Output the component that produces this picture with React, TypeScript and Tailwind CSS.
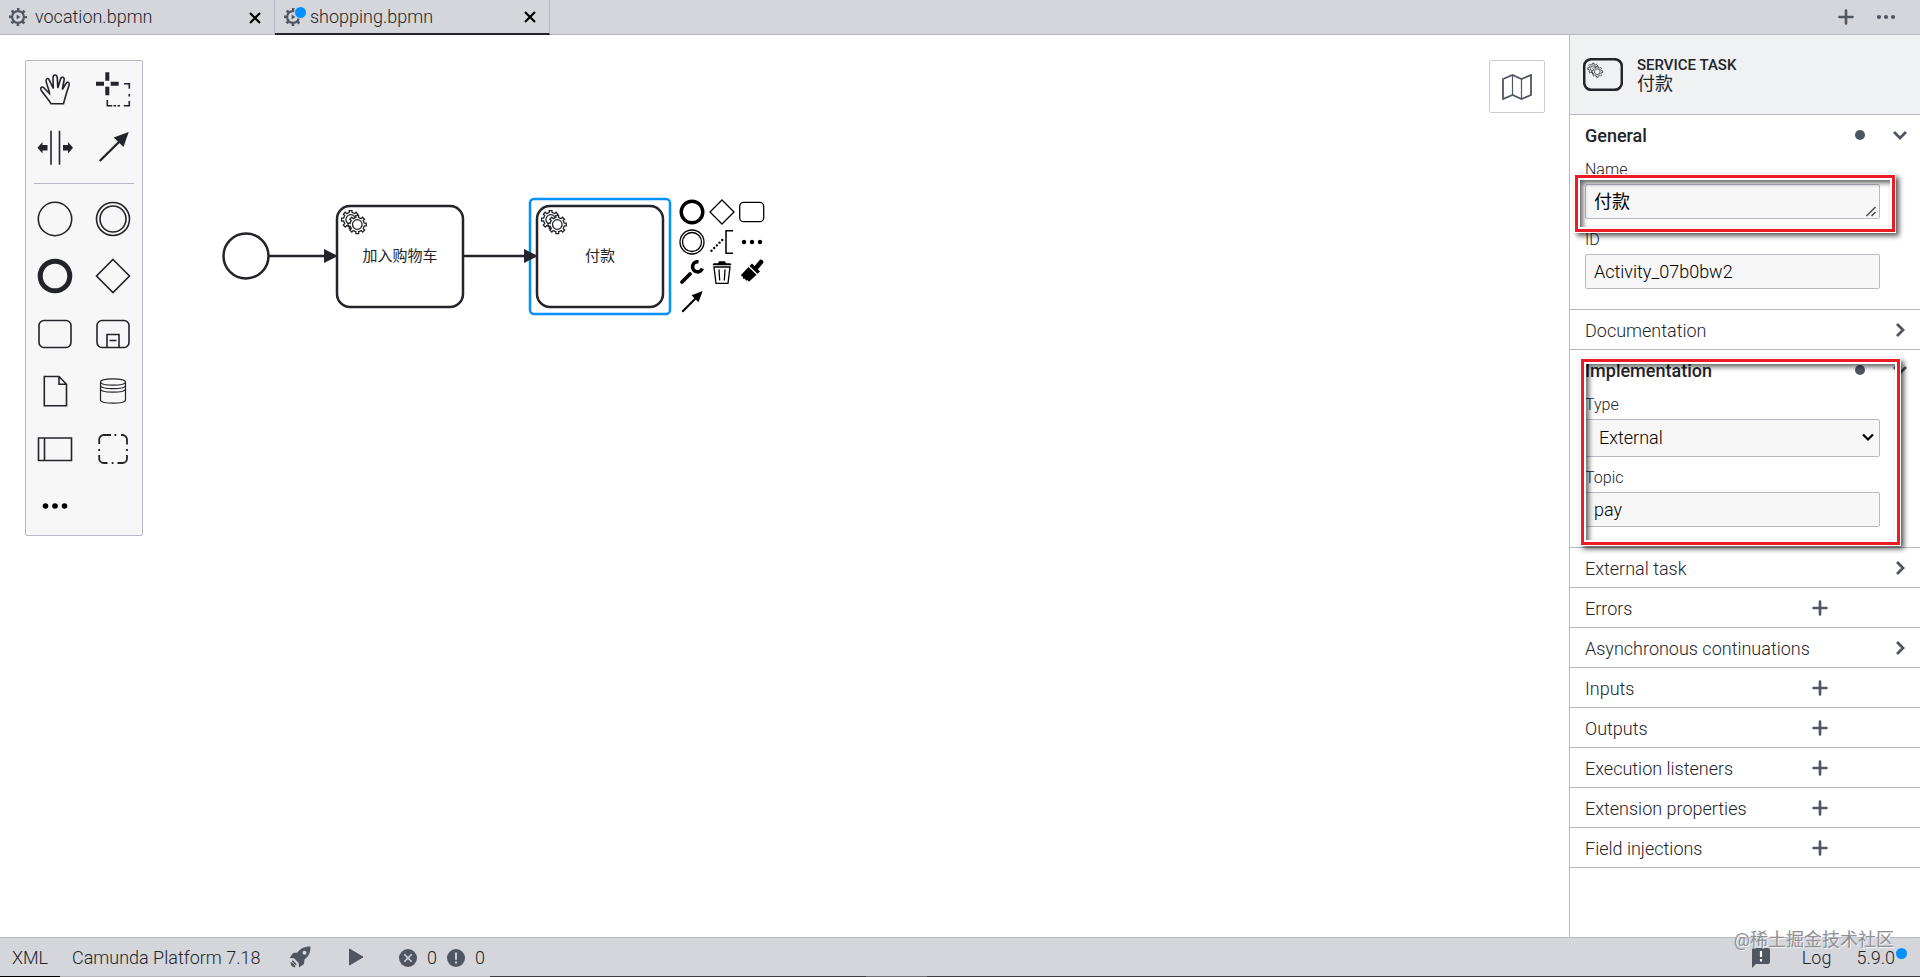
import { useState, type ReactNode } from "react";
import { clsx } from "clsx";

const GEAR =
  "v-1.713c.352-.07.704-.178 1.048-.321.344-.145.666-.321.966-.521l1.194 1.18 1.567-1.577-1.195-1.18c.403-.614.683-1.299.825-2.018l1.622-.01v-2.22l-1.637.01c-.073-.352-.178-.7-.323-1.044-.145-.344-.321-.664-.523-.962l1.131-1.136-1.583-1.563-1.13 1.136c-.614-.401-1.303-.681-2.023-.823l.01-1.618h-2.241l.004 1.631c-.354.074-.705.18-1.05.324-.344.144-.665.321-.963.52l-1.17-1.158-1.567 1.579 1.168 1.157c-.402.613-.683 1.298-.824 2.017l-1.659.003v2.222l1.672-.006c.074.351.18.702.325 1.044.145.345.321.665.522.961l-1.199 1.197 1.584 1.56 1.196-1.193c.614.403 1.303.682 2.024.823l.001 1.699h2.227z";

function Gears({ fill }: { fill: string }) {
  return (
    <g fill={fill} stroke="#22242a" strokeWidth="1">
      <path d={`M12 18${GEAR}`} />
      <circle cx="10.9" cy="10.7" r="3.8" />
      <path d={`M17.2 22${GEAR}`} />
      <circle cx="16.1" cy="14.7" r="3.8" />
    </g>
  );
}

function PlusIcon() {
  return (
    <svg width="16" height="16" viewBox="0 0 16 16" className="stroke-[#505562]" strokeWidth="2.6" strokeLinecap="round">
      <path d="M8 1.5v13M1.5 8h13" />
    </svg>
  );
}

function ChevronIcon({ open }: { open: boolean }) {
  return (
    <svg width="16" height="16" viewBox="0 0 16 16" fill="none" className="stroke-[#505562]" strokeWidth="2.8">
      <path d={open ? "M2 5l6 6 6-6" : "M5 2l6 6-6 6"} />
    </svg>
  );
}

function TabGear() {
  return (
    <svg width="18" height="18" viewBox="0 0 18 18" fill="none" className="stroke-[#505562]">
      <circle cx="9" cy="9" r="5.9" strokeWidth="2.2" />
      <circle cx="9" cy="9" r="7.7" strokeWidth="2.6" strokeDasharray="2.6 3.447" strokeDashoffset="1.3" />
      <path d="M7.6 6.4v5.2L11.4 9z" className="fill-[#505562]" stroke="none" />
    </svg>
  );
}

interface TabProps {
  name: string;
  active?: boolean;
  dirty?: boolean;
}

function Tab({ name, active = false, dirty = false }: TabProps) {
  return (
    <div
      className={clsx(
        "relative flex h-full w-[275px] items-center border-r border-[#b8b9c7] pl-[9px] pr-[11px]",
        active && "border-b-2 border-b-[#22242a]"
      )}
    >
      <button type="button" className={clsx("flex flex-1 items-center gap-2 text-left", !active && "pb-px")}>
        <span className="relative">
          <TabGear />
          {dirty && (
            <span className="absolute -right-1 -top-px h-[11px] w-[11px] rounded-full bg-[#0090ff] ring-1 ring-[#d5d6db]" />
          )}
        </span>
        {name}
      </button>
      <button type="button" aria-label={`Close ${name}`} className="flex h-4 w-4 items-center justify-center">
        <svg width="12" height="12" viewBox="0 0 12 12" stroke="#000" strokeWidth="2.2">
          <path d="M1 1l10 10M11 1L1 11" />
        </svg>
      </button>
    </div>
  );
}

const paletteTop: { label: string; icon: ReactNode }[] = [
  {
    label: "Activate hand tool",
    icon: (
      <path d="M16 33.7C13.5 29 8 23.5 6 19.8C4.8 17 7.8 16 9.5 18.5L14.5 23.5C14.3 19.5 11.3 14 11 10.8C11 8 13.6 7.8 14.3 10.2L18.3 18.5L18 8C18 4 22 4 22.3 8L22.8 18L25.5 9C26.3 6 29.6 7 29.1 10L27.3 19.5L31 13.5C32.3 11 35 12.5 34 15.5L31.5 23C30.3 27 29.5 30 28.5 33.7Z" />
    ),
  },
  {
    label: "Activate lasso tool",
    icon: (
      <>
        <path d="M14.3 2.3v8.5M14.3 16.7v8.5M3 13.7h8M17.7 13.7h8" strokeWidth="4" />
        <path d="M31 13.7h5.3v5M36.3 24v2.5M36.3 31v4.7h-5.5M27 35.7h-2.5M23 35.7h-2.5M14.3 30v5.7h5" />
      </>
    ),
  },
  {
    label: "Activate create/remove space tool",
    icon: (
      <>
        <path d="M16 2.7v34M24.5 2.7v34" />
        <path d="M2.5 19.7l5-5.7v3h5v5.4h-5v3zM38 19.7l-5-5.7v3h-5v5.4h5v3z" fill="#22242a" stroke="none" />
      </>
    ),
  },
  {
    label: "Activate global connect tool",
    icon: (
      <>
        <path d="M6.7 33L28 12" strokeWidth="2.4" />
        <path d="M35.7 4L20.7 9.5l9.8 9.5z" fill="#22242a" stroke="none" />
      </>
    ),
  },
];

const paletteShapes: { label: string; icon: ReactNode }[] = [
  { label: "Create start event", icon: <circle cx="20" cy="20" r="16.7" /> },
  {
    label: "Create intermediate event",
    icon: (
      <>
        <circle cx="20" cy="20" r="16.5" />
        <circle cx="20" cy="20" r="13" />
      </>
    ),
  },
  { label: "Create end event", icon: <circle cx="20" cy="20" r="14.8" strokeWidth="5" /> },
  { label: "Create gateway", icon: <path d="M20 3.5L36.5 20 20 36.5 3.5 20z" /> },
  { label: "Create task", icon: <rect x="4" y="6.5" width="32" height="27" rx="5" /> },
  {
    label: "Create expanded sub-process",
    icon: (
      <>
        <rect x="4" y="6.5" width="32" height="27" rx="5" />
        <path d="M14 33.5v-13h12v13M16.5 26.5h7" />
      </>
    ),
  },
  { label: "Create data object", icon: <path d="M9.3 5.5H24l7.5 7.8v21.4H9.3zM24 5.5v7.8h7.5" /> },
  {
    label: "Create data store",
    icon: (
      <path
        d="M7.5 11c0-4.200 25-4.200 25 0v18c0 4.200-25 4.200-25 0zM7.500 11c0 4.200 25 4.200 25 0M7.500 14.500c0 4.200 25 4.200 25 0M7.500 18c0 4.200 25 4.200 25 0"
        strokeWidth="1.2"
      />
    ),
  },
  { label: "Create pool/participant", icon: <path d="M3.5 9h33v22.5h-33zM9.5 9v22.5" strokeWidth="1.6" /> },
  {
    label: "Create group",
    icon: (
      <path
        d="M6.200 15v-4.500a4.500 4.500 0 0 1 4.500-4.500H18M21.500 6h1.800M28 6h1.500a4.500 4.500 0 0 1 4.500 4.500V15.500M34 20v2M34 26v3.500a4.500 4.500 0 0 1-4.500 4.500H24.500M20.500 34h-1.800M14.500 34h-3.800a4.500 4.500 0 0 1-4.500-4.500V26M6.200 20v2"
        strokeWidth="1.8"
      />
    ),
  },
  {
    label: "Create element",
    icon: (
      <g fill="#000" stroke="none">
        <circle cx="10.5" cy="20" r="2.8" />
        <circle cx="20" cy="20" r="2.8" />
        <circle cx="29.5" cy="20" r="2.8" />
      </g>
    ),
  },
];

const contextPad: { label: string; icon: ReactNode }[] = [
  { label: "Append end event", icon: <circle cx="15" cy="15" r="10.8" strokeWidth="3.4" /> },
  { label: "Append gateway", icon: <path d="M15 3l12 12-12 12L3 15z" /> },
  { label: "Append task", icon: <rect x="2.7" y="5.3" width="24" height="19.4" rx="4" /> },
  {
    label: "Append intermediate event",
    icon: (
      <>
        <circle cx="15" cy="15" r="12" />
        <circle cx="15" cy="15" r="9.5" />
      </>
    ),
  },
  {
    label: "Append text annotation",
    icon: (
      <>
        <path d="M26 3.7h-7v22.6h7" strokeWidth="1.5" />
        <path d="M4.5 23.7L15.5 12.7" strokeWidth="2.4" strokeDasharray="0 3.8" strokeLinecap="round" />
      </>
    ),
  },
  {
    label: "Append element",
    icon: (
      <g fill="#000" stroke="none">
        <circle cx="7" cy="15" r="2.2" />
        <circle cx="15" cy="15" r="2.2" />
        <circle cx="23" cy="15" r="2.2" />
      </g>
    ),
  },
  {
    label: "Change type",
    icon: (
      <>
        <path d="M5 25l8-8" strokeWidth="3.8" strokeLinecap="round" />
        <path d="M21.5 4.9A5 5 0 1 0 25.3 11.5" strokeWidth="3.6" />
      </>
    ),
  },
  {
    label: "Remove",
    icon: (
      <>
        <path d="M5.500 8.200l1-2h4.500l1-2h6l1 2h4.500l1 2z" fill="#000" stroke="none" />
        <path d="M7 10h16l-2 16.300H9zM12 12.500l.7 11M18 12.500l-.7 11" />
      </>
    ),
  },
  {
    label: "Set color",
    icon: (
      <>
        <path d="M24 5l-5 6" strokeWidth="4.6" strokeLinecap="round" />
        <path d="M15 6.500l8 8-2.500 2.200-8-7.700zM11.500 10l8 7.700-7.500 7-1.500-1.700-1.500.7-1-2-2 0-.2-2-2-1.500z" fill="#000" stroke="none" />
      </>
    ),
  },
  {
    label: "Connect",
    icon: (
      <>
        <path d="M5.300 24.700L19 11" strokeWidth="2" />
        <path d="M25.700 4L14.500 8.200l7 7z" fill="#000" stroke="none" />
      </>
    ),
  },
];

function PaletteButton({ label, children }: { label: string; children: ReactNode }) {
  return (
    <button type="button" title={label} aria-label={label} className="flex items-center justify-center">
      <svg width="40" height="40" viewBox="0 0 40 40" fill="none" stroke="#22242a" strokeWidth="1.6">
        {children}
      </svg>
    </button>
  );
}

function Palette() {
  return (
    <div className="absolute left-[25px] top-[25px] w-[118px] rounded-xs border border-[#b8b9c7] bg-[#f7f7f8]">
      <div className="grid h-[116px] grid-cols-2 grid-rows-2">
        {paletteTop.map((e) => (
          <PaletteButton key={e.label} label={e.label}>{e.icon}</PaletteButton>
        ))}
      </div>
      <hr className="mx-2 my-1.5 border-[#b8b9c7]" />
      <div className="grid h-[345px] grid-cols-2 grid-rows-6">
        {paletteShapes.map((e) => (
          <PaletteButton key={e.label} label={e.label}>{e.icon}</PaletteButton>
        ))}
      </div>
    </div>
  );
}

function TaskNode({ x, y, name }: { x: number; y: number; name: string }) {
  return (
    <g>
      <rect x={x} y={y} width="126" height="101" rx="13" fill="#fff" stroke="#22242a" strokeWidth="2.5" />
      <g transform={`translate(${x} ${y}) scale(1.26)`}>
        <Gears fill="#fff" />
      </g>
      <text x={x + 63} y={y + 55} textAnchor="middle" fontSize="15" fill="#22242a">
        {name}
      </text>
    </g>
  );
}

function Diagram() {
  return (
    <div className="relative min-w-0 flex-1 overflow-hidden bg-white">
      <svg className="absolute left-0 top-0 h-full w-full font-normal">
        <circle cx="246" cy="221" r="22.5" fill="#fff" stroke="#22242a" strokeWidth="2.5" />
        <TaskNode x={337} y={171} name="加入购物车" />
        <TaskNode x={537} y={171} name="付款" />
        <rect x="530" y="164" width="140" height="115" rx="4" fill="none" stroke="#0090ff" strokeWidth="2.5" />
        <path d="M269 221h60M463 221h66" stroke="#22242a" strokeWidth="2.5" />
        <path d="M324 214l14 7-14 7zM524 214l14 7-14 7z" fill="#22242a" />
      </svg>
      <Palette />
      <div className="absolute left-[677px] top-[162px] grid w-[90px] grid-cols-3">
        {contextPad.map((e) => (
          <button key={e.label} type="button" title={e.label} aria-label={e.label} className="h-[30px] w-[30px]">
            <svg width="30" height="30" viewBox="0 0 30 30" fill="none" stroke="#000" strokeWidth="1.3">
              {e.icon}
            </svg>
          </button>
        ))}
      </div>
      <button
        type="button"
        aria-label="Toggle minimap"
        className="absolute right-6 top-[25px] flex h-[53px] w-14 items-center justify-center rounded-xs border border-[#cccccc] bg-white"
      >
        <svg width="30" height="26" viewBox="0 0 30 26" fill="none" stroke="#505562" strokeWidth="1.8">
          <path d="M1 5l9.500-4 9 4L29 1v20l-9.500 4-9-4L1 25z" />
          <path d="M10.500 1v20M19.500 5v20" strokeWidth="1.2" />
        </svg>
      </button>
    </div>
  );
}

interface GroupProps {
  title: string;
  kind?: "toggle" | "add";
  open?: boolean;
  children?: ReactNode;
}

function Group({ title, kind = "toggle", open = false, children }: GroupProps) {
  return (
    <section className="relative border-b border-[#b8b9c7]">
      <div className={clsx("flex items-center pl-[15px]", open ? "h-10" : "h-[39px]")}>
        <h2 className={clsx("flex-1 whitespace-nowrap pt-0.5", open && "font-medium")}>{title}</h2>
        {kind === "add" ? (
          <button type="button" aria-label={`Add ${title}`} className="mr-20 flex w-10 justify-center">
            <PlusIcon />
          </button>
        ) : (
          <>
            {open && (
              <span className="flex w-10 justify-center">
                <span className="h-2.5 w-2.5 rounded-full bg-[#505562]" />
              </span>
            )}
            <button type="button" aria-label={`Toggle ${title}`} className="flex w-10 justify-center">
              <ChevronIcon open={open} />
            </button>
          </>
        )}
      </div>
      {open && <div className="flex flex-col gap-[11px] pb-5 pl-[15px] pr-10 pt-[5px]">{children}</div>}
    </section>
  );
}

function Field({ id, label, children }: { id: string; label: string; children: ReactNode }) {
  return (
    <div className="flex flex-col gap-1">
      <label htmlFor={id} className="text-base leading-5">{label}</label>
      {children}
    </div>
  );
}

function Highlight({ className }: { className: string }) {
  return (
    <div
      className={clsx(
        "pointer-events-none absolute border-[3px] border-[#ed1c24] shadow-[0_0_0_1px_#fff,3px_3px_5px_1px_rgba(0,0,0,0.65),inset_0_0_0_2px_#fff,inset_3px_3px_5px_2px_rgba(0,0,0,0.6)]",
        className
      )}
    />
  );
}

function PropertiesPanel() {
  const [name, setName] = useState("付款");
  const [id, setId] = useState("Activity_07b0bw2");
  const [type, setType] = useState("External");
  const [topic, setTopic] = useState("pay");

  const input = "block h-[35px] w-full rounded-xs border border-[#b8b9c7] bg-[#f7f7f8] px-2 text-black";

  return (
    <aside className="w-[351px] shrink-0 border-l border-[#b8b9c7] bg-white">
      <header className="flex h-20 items-center gap-3.5 border-b border-[#b8b9c7] bg-[#f0f1f3] pl-[13px]">
        <svg width="40" height="33" viewBox="0 0 40 33" fill="none">
          <rect x="1.2" y="1.2" width="37.6" height="30.6" rx="7" stroke="#22242a" strokeWidth="2.5" />
          <g transform="translate(2 2.5) scale(0.76)">
            <Gears fill="#f0f1f3" />
          </g>
        </svg>
        <div className="leading-5">
          <div className="text-[15px] font-medium leading-[18px]">SERVICE TASK</div>
          <div className="font-normal">付款</div>
        </div>
      </header>

      <Group title="General" open>
        <Field id="name" label="Name">
          <div className="relative">
            <textarea
              id="name"
              rows={1}
              className={clsx(input, "resize-none overflow-hidden py-[5px] font-normal leading-6")}
              value={name}
              onChange={(e) => setName(e.target.value)}
            />
            <svg width="12" height="12" viewBox="0 0 12 12" stroke="#505050" strokeWidth="1.6" className="pointer-events-none absolute bottom-0.5 right-[3px]">
              <path d="M1.500 11l9-9M6.500 11l4-4" />
            </svg>
          </div>
        </Field>
        <Field id="element-id" label="ID">
          <input id="element-id" type="text" className={input} value={id} onChange={(e) => setId(e.target.value)} />
        </Field>
        <Highlight className="left-[5px] right-[25px] top-[60px] h-[57px]" />
      </Group>
      <Group title="Documentation" />
      <Group title="Implementation" open>
        <Field id="type" label="Type">
          <div className="relative">
            <select
              id="type"
              className="block h-[38px] w-full appearance-none rounded-xs border border-[#b8b9c7] bg-[#f7f7f8] px-[13px] text-black"
              value={type}
              onChange={(e) => setType(e.target.value)}
            >
              <option>External</option>
              <option>Java class</option>
              <option>Expression</option>
              <option>Delegate expression</option>
              <option>Connector</option>
            </select>
            <svg width="12" height="12" viewBox="0 0 12 12" fill="none" stroke="#000" strokeWidth="2.2" className="pointer-events-none absolute right-1.5 top-3">
              <path d="M1 3.500l5 5 5-5" />
            </svg>
          </div>
        </Field>
        <Field id="topic" label="Topic">
          <input id="topic" type="text" className={input} value={topic} onChange={(e) => setTopic(e.target.value)} />
        </Field>
        <Highlight className="left-[11px] right-5 top-[9px] h-[186px]" />
      </Group>
      <Group title="External task" />
      <Group title="Errors" kind="add" />
      <Group title="Asynchronous continuations" />
      <Group title="Inputs" kind="add" />
      <Group title="Outputs" kind="add" />
      <Group title="Execution listeners" kind="add" />
      <Group title="Extension properties" kind="add" />
      <Group title="Field injections" kind="add" />
    </aside>
  );
}

function StatusBar() {
  return (
    <footer className="relative border-t border-[#b8b9c7] bg-[#d5d6db]">
      <div className="flex h-[38px] items-center pt-0.5">
        <button type="button" className="w-[60px] pl-3 text-left">XML</button>
        <button type="button" className="w-[210px] pl-3 text-left">Camunda Platform 7.18</button>
        <button type="button" aria-label="Deploy current diagram" className="flex w-[60px] justify-center pb-0.5">
          <svg width="22" height="22" viewBox="0 0 22 22" fill="#505562">
            <path d="M21.500.5c-6-.2-10.300 2-13 6L4 7 .7 12l4.300.3 4.700 4.700.3 4.500 5-3.500.5-4.500c4-3 6-7 6-13zM15.500 4.800a2 2 0 1 1 0 4 2 2 0 0 1 0-4z" fillRule="evenodd" />
            <path d="M3.800 14.200l4 4-1 1.300-4-4zM1.300 16l2 .8 2.500 2.500.7 2.200-3-.8-1.500-1.700z" />
          </svg>
        </button>
        <button type="button" aria-label="Start current diagram" className="flex w-[52px] justify-center pb-0.5">
          <svg width="16" height="18" viewBox="0 0 16 18" fill="#505562" stroke="#505562" strokeLinejoin="round">
            <path d="M1.500 1v16L15 9z" />
          </svg>
        </button>
        <button type="button" className="ml-[17px] flex items-center gap-2.5">
          <svg width="18" height="18" viewBox="0 0 18 18">
            <circle cx="9" cy="9" r="9" fill="#505562" />
            <path d="M5.300 5.300l7.400 7.400M12.700 5.300l-7.400 7.400" stroke="#d5d6db" strokeWidth="1.5" />
          </svg>
          0
          <svg width="18" height="18" viewBox="0 0 18 18">
            <circle cx="9" cy="9" r="9" fill="#505562" />
            <path d="M9 3.500v7.300M9 12.500v2" stroke="#d5d6db" strokeWidth="1.9" />
          </svg>
          0
        </button>
        <button type="button" aria-label="Give feedback" className="ml-auto mr-8">
          <svg width="18" height="20" viewBox="0 0 18 20">
            <path d="M2 0h14a2 2 0 0 1 2 2v12a2 2 0 0 1-2 2H4l-4 4V2a2 2 0 0 1 2-2z" fill="#505562" />
            <path d="M9 3v6M9 11v2.500" stroke="#fff" strokeWidth="2.2" />
          </svg>
        </button>
        <button type="button" className="mr-[25px]">Log</button>
        <button type="button" className="relative mr-[25px]">
          5.9.0
          <span className="absolute -right-3 top-0.5 h-[11px] w-[11px] rounded-full bg-[#0090ff]" />
        </button>
      </div>
      <div className="flex h-px">
        <span className="w-[60px] bg-black" />
        <span className="w-[430px] bg-[#b5b5b9]" />
        <span className="w-[376px] bg-[#3d3d40]" />
        <span className="w-[61px] bg-[#6d6d70]" />
        <span className="flex-1 bg-[#3d3d40]" />
      </div>
      <span className="pointer-events-none absolute -top-2.5 right-[26px] text-[18px] font-normal leading-6 text-[#8f9095] [text-shadow:1px_1px_0_#f3f3f5]">
        @稀土掘金技术社区
      </span>
    </footer>
  );
}

export default function App() {
  return (
    <div className="flex h-screen flex-col overflow-hidden font-['Roboto','Noto_Sans_CJK_SC',sans-serif] text-[18px] font-light leading-6 text-[#22242a]">
      <nav className="flex h-[35px] shrink-0 items-center border-b border-[#b8b9c7] bg-[#d5d6db]">
        <div className="-mb-px flex h-[35px]">
          <Tab name="vocation.bpmn" />
          <Tab name="shopping.bpmn" active dirty />
        </div>
        <div className="ml-auto mr-6 flex items-center gap-[22px]">
          <button type="button" aria-label="Create new diagram">
            <PlusIcon />
          </button>
          <button type="button" aria-label="Show open tabs">
            <svg width="20" height="6" viewBox="0 0 20 6" fill="#505562">
              <circle cx="3" cy="3" r="2.1" />
              <circle cx="10" cy="3" r="2.1" />
              <circle cx="17" cy="3" r="2.1" />
            </svg>
          </button>
        </div>
      </nav>
      <main className="flex min-h-0 flex-1">
        <Diagram />
        <PropertiesPanel />
      </main>
      <StatusBar />
    </div>
  );
}
